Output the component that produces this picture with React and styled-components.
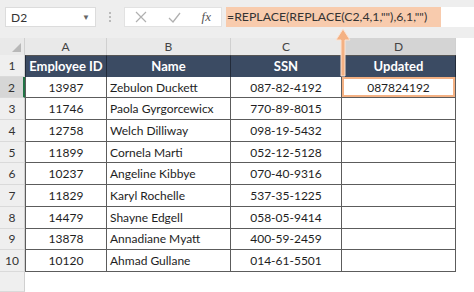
import React from 'react'
import styled, { createGlobalStyle } from 'styled-components'

const Global = createGlobalStyle`
  html, body { margin: 0; padding: 0; background: #ffffff; }
  body { font-family: Lato, "Open Sans", sans-serif; }
`

const Sheet = styled.div`
  position: relative;
  width: 474px;
  height: 292px;
  overflow: hidden;
  background: #ffffff;
`

const TopBar = styled.div`
  height: 38px;
  box-sizing: border-box;
  padding: 7px 0 0 5px;
  background: #eeeeee;
  display: flex;
  align-items: flex-start;
`

const NameBox = styled.div`
  width: 91px;
  height: 20px;
  box-sizing: border-box;
  background: #fff;
  border: 1px solid #dcdcdc;
  display: flex;
  align-items: center;
  justify-content: space-between;
  padding: 0 5px 0 5px;
  font-size: 12px;
  color: #333;
`

const Caret = styled.span`
  font-size: 8px;
  color: #666;
`

const Dots = styled.div`
  width: 28px;
  height: 20px;
  display: flex;
  flex-direction: column;
  align-items: center;
  justify-content: center;
  gap: 2px;
  & > i {
    width: 2px;
    height: 2px;
    background: #a8a8a8;
    border-radius: 1px;
  }
`

const ButtonBox = styled.div`
  width: 98px;
  height: 20px;
  box-sizing: border-box;
  background: #fff;
  border: 1px solid #e2e2e2;
  display: flex;
  align-items: center;
  justify-content: space-between;
  padding: 0 10px 0 10px;
`

const Fx = styled.span`
  font-family: "Liberation Serif", serif;
  font-style: italic;
  font-size: 13px;
  color: #555;
`

const FormulaBar = styled.div`
  flex: 1;
  height: 20px;
  margin-left: 4px;
  background: #fff;
  display: flex;
`

const Formula = styled.div`
  width: 214px;
  height: 20px;
  background: #f8cbad;
  font-size: 12.3px;
  line-height: 20px;
  color: #333;
  padding-left: 1px;
  white-space: nowrap;
  overflow: hidden;
`

const Grid = styled.div`
  display: grid;
  grid-template-columns: 25px 82px 124px 111px 114px 1fr;
  grid-template-rows: 17px repeat(10, 21.7px) 1fr;
  height: 254px;
`

const ColHead = styled.div`
  background: ${p => (p.$active ? '#d4d4d4' : '#e9e9e9')};
  border-right: 1px solid #d0d0d0;
  box-sizing: border-box;
  display: flex;
  align-items: center;
  justify-content: center;
  font-size: 12px;
  color: #444;
`

const Corner = styled(ColHead)`
  position: relative;
  &::after {
    content: '';
    position: absolute;
    right: 3px;
    bottom: 3px;
    border-left: 9px solid transparent;
    border-bottom: 9px solid #b8b8b8;
  }
`

const RowHead = styled.div`
  background: ${p => (p.$active ? '#d6d6d6' : '#efefef')};
  border-bottom: 1px solid #dadada;
  border-right: ${p => (p.$active ? '2px solid #217346' : '1px solid #d0d0d0')};
  box-sizing: border-box;
  display: flex;
  align-items: center;
  justify-content: center;
  font-size: 12px;
  color: #333;
`

const Head = styled.div`
  background: #3b4b63;
  color: #fff;
  font-weight: 700;
  font-size: 13px;
  border-right: 1px solid #222b3a;
  border-top: 1px solid #555;
  box-sizing: border-box;
  display: flex;
  align-items: center;
  justify-content: center;
  ${p => p.$first && 'border-left: 1px solid #222b3a;'}
`

const Cell = styled.div`
  box-sizing: border-box;
  border-right: 1px solid #5c5c5c;
  border-bottom: 1px solid #5c5c5c;
  ${p => p.$first && 'border-left: 1px solid #5c5c5c;'}
  display: flex;
  align-items: center;
  justify-content: ${p => (p.$left ? 'flex-start' : 'center')};
  padding-left: ${p => (p.$left ? '3px' : '0')};
  font-size: 12px;
  color: #1e1e1e;
  white-space: nowrap;
  ${p => p.$selected && 'box-shadow: inset 0 0 0 2px #f4b183;'}
`

const Blank = styled.div`
  background: #fff;
`

const Pointer = styled.svg`
  position: absolute;
  left: 334px;
  top: 28px;
`

const rows = [
  ['13987', 'Zebulon Duckett', '087-82-4192', '087824192'],
  ['11746', 'Paola Gyrgorcewicx', '770-89-8015', ''],
  ['12758', 'Welch Dilliway', '098-19-5432', ''],
  ['11899', 'Cornela Marti', '052-12-5128', ''],
  ['10237', 'Angeline Kibbye', '070-40-9316', ''],
  ['11829', 'Karyl Rochelle', '537-35-1225', ''],
  ['14479', 'Shayne Edgell', '058-05-9414', ''],
  ['13878', 'Annadiane Myatt', '400-59-2459', ''],
  ['10120', 'Ahmad Gullane', '014-61-5501', ''],
]

export default function App() {
  return (
    <Sheet>
      <Global />
      <TopBar>
        <NameBox>
          D2
          <Caret>▼</Caret>
        </NameBox>
        <Dots>
          <i />
          <i />
          <i />
        </Dots>
        <ButtonBox>
          <svg width="12" height="12" viewBox="0 0 12 12">
            <path d="M1 1 L11 11 M11 1 L1 11" stroke="#b0b0b0" strokeWidth="1.2" fill="none" />
          </svg>
          <svg width="13" height="11" viewBox="0 0 13 11">
            <path d="M1 6 L5 10 L12 1" stroke="#b0b0b0" strokeWidth="1.3" fill="none" />
          </svg>
          <Fx>fx</Fx>
        </ButtonBox>
        <FormulaBar>
          <Formula>=REPLACE(REPLACE(C2,4,1,""),6,1,"")</Formula>
        </FormulaBar>
      </TopBar>
      <Grid>
        <Corner />
        <ColHead>A</ColHead>
        <ColHead>B</ColHead>
        <ColHead>C</ColHead>
        <ColHead $active>D</ColHead>
        <Blank />

        <RowHead>1</RowHead>
        <Head $first>Employee ID</Head>
        <Head>Name</Head>
        <Head>SSN</Head>
        <Head>Updated</Head>
        <Blank />

        {rows.map((r, i) => (
          <React.Fragment key={r[0]}>
            <RowHead $active={i === 0}>{i + 2}</RowHead>
            <Cell $first>{r[0]}</Cell>
            <Cell $left>{r[1]}</Cell>
            <Cell>{r[2]}</Cell>
            <Cell $selected={i === 0}>{r[3]}</Cell>
            <Blank />
          </React.Fragment>
        ))}

        <RowHead />
        <Blank />
        <Blank />
        <Blank />
        <Blank />
        <Blank />
      </Grid>
      <Pointer width="18" height="50" viewBox="0 0 18 50">
        <path
          d="M9 1 L16 12 L11 12 L11 48 L7 48 L7 12 L2 12 Z"
          fill="#f4b183"
          stroke="#fbe3d3"
          strokeWidth="1"
        />
      </Pointer>
    </Sheet>
  )
}
